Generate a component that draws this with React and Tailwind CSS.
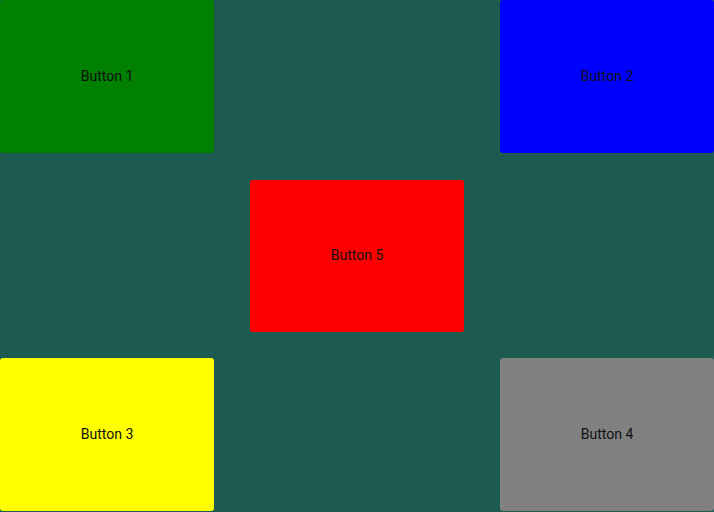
import React from 'react'

const buttons = [
  { label: 'Button 1', cls: 'bg-[#008000] col-start-1 row-start-1' },
  { label: 'Button 2', cls: 'bg-[#0000ff] col-start-3 row-start-1' },
  { label: 'Button 5', cls: 'bg-[#ff0000] col-start-2 row-start-2' },
  { label: 'Button 3', cls: 'bg-[#ffff00] col-start-1 row-start-3' },
  { label: 'Button 4', cls: 'bg-[#808080] col-start-3 row-start-3' },
]

export default function App() {
  return (
    <div
      className="w-[714px] h-[512px] bg-[#1d5a50] grid grid-cols-[214px_214px_214px] grid-rows-[153px_152px_153px] justify-between content-between pb-[1px]"
      style={{ fontFamily: 'Roboto, "Liberation Sans", sans-serif' }}
    >
      {buttons.map((b) => (
        <button
          key={b.label}
          className={`${b.cls} rounded-[3px] flex items-center justify-center text-[14px] text-[#111]`}
        >
          {b.label}
        </button>
      ))}
    </div>
  )
}
